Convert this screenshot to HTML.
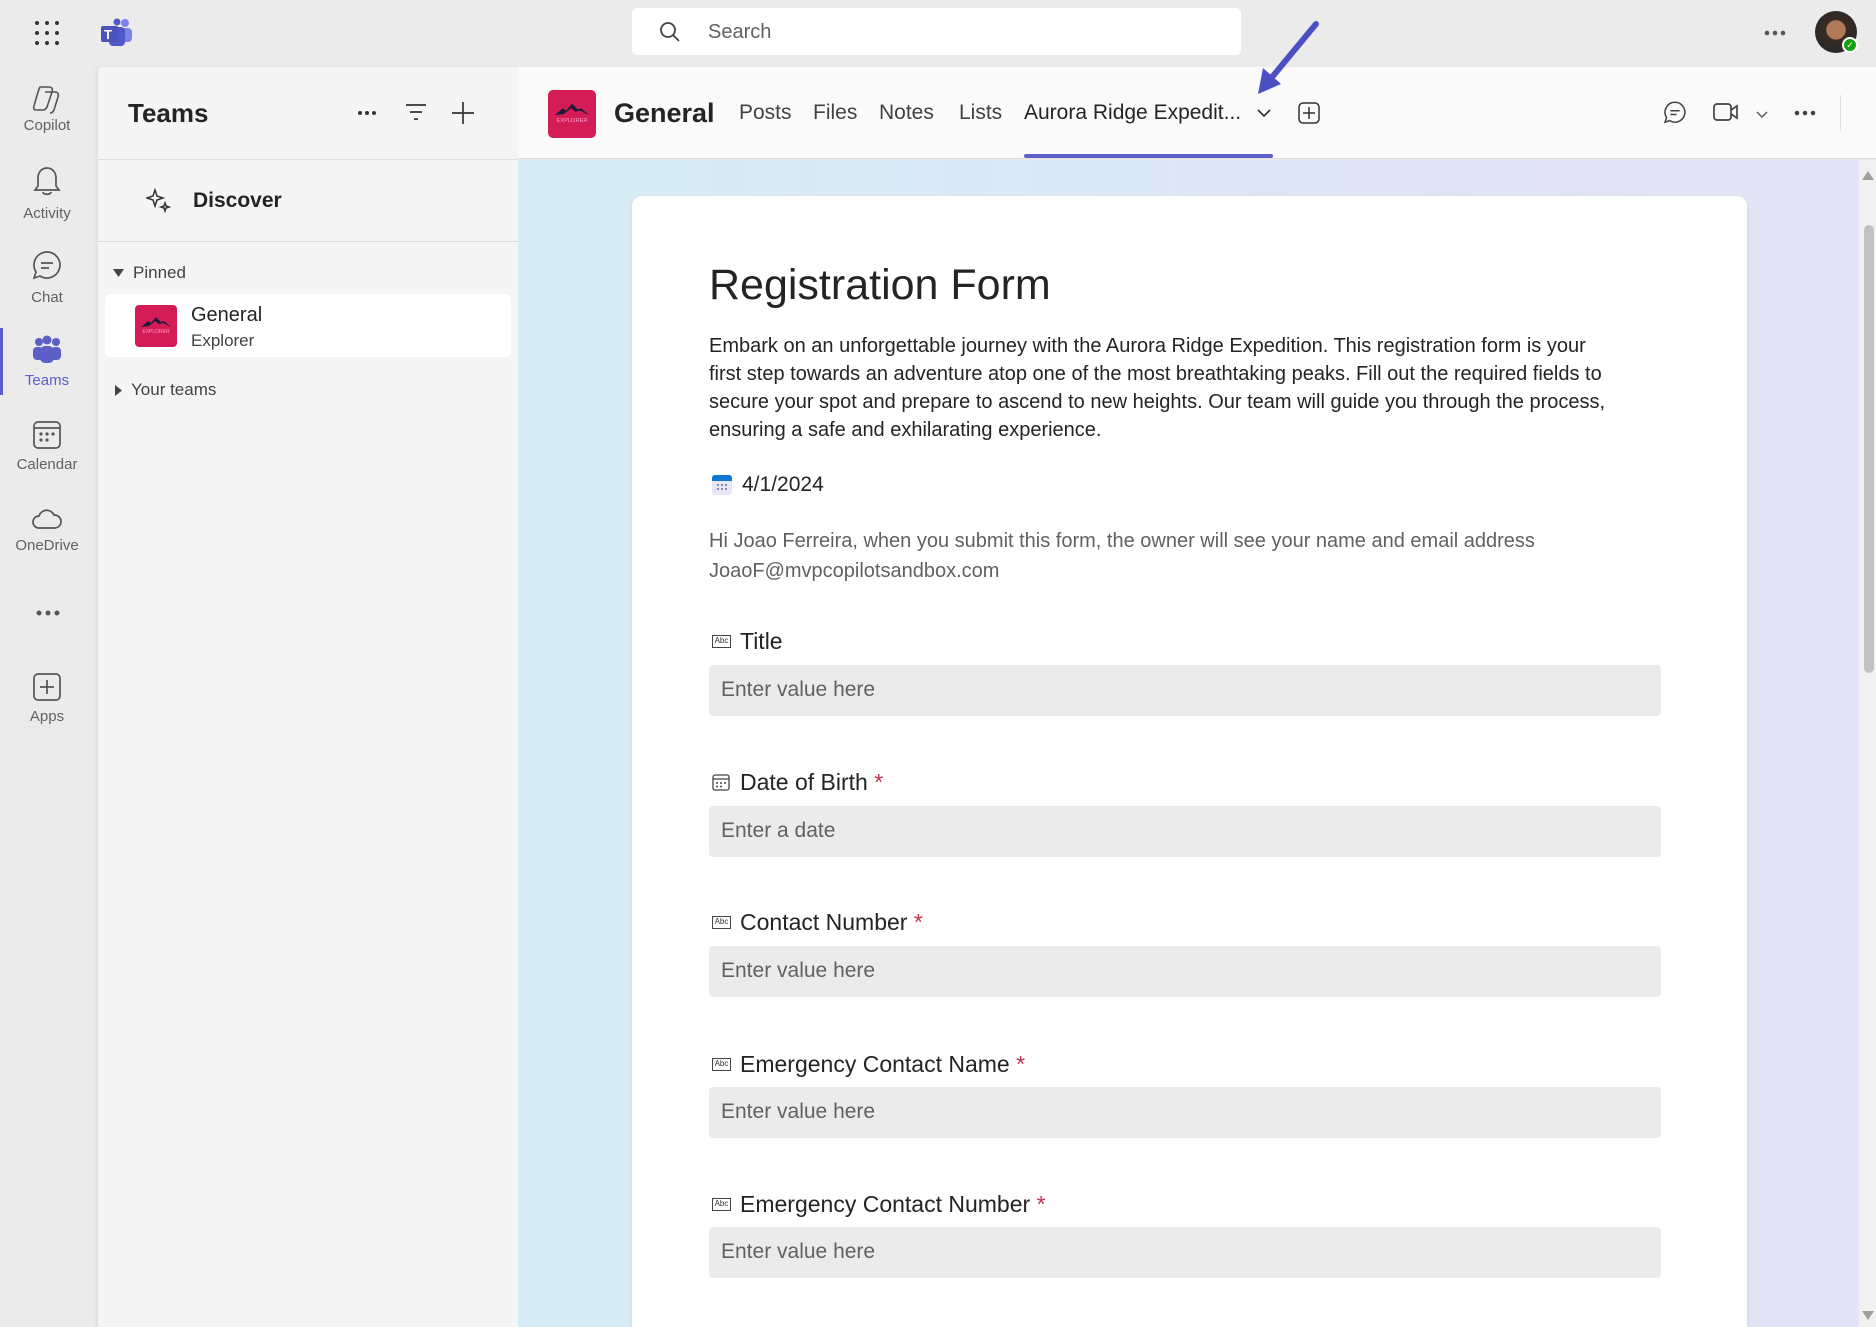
<!DOCTYPE html>
<html><head><meta charset="utf-8"><style>
*{margin:0;padding:0;box-sizing:border-box}
html,body{width:1876px;height:1327px;overflow:hidden}
body{background:#ebebeb;font-family:"Liberation Sans",sans-serif;position:relative;color:#242424}
.a{position:absolute}
.rl{position:absolute;left:0;width:94px;text-align:center;font-size:15px;color:#616161}
.ic{position:absolute;left:30px;width:34px;height:34px}
.lab{position:absolute;left:740px;font-size:23px;color:#242424}
.lab i{color:#c4314b;font-style:normal}
.inp{position:absolute;left:709px;width:952px;height:51px;background:#ebebeb;border-radius:4px;font-size:21px;color:#616161;padding:13px 12px}
.abc{position:absolute;left:712px;width:19px;height:13px;border:1.3px solid #444;font-size:8px;line-height:10px;text-align:center;color:#333}
.tab{position:absolute;top:101px;font-size:21px;color:#424242}
</style></head><body>
<!-- top bar -->
<svg class="a" style="left:34px;top:20px" width="26" height="26" viewBox="0 0 26 26" fill="#333"><circle cx="3" cy="3" r="2"/><circle cx="13" cy="3" r="2"/><circle cx="23" cy="3" r="2"/><circle cx="3" cy="13" r="2"/><circle cx="13" cy="13" r="2"/><circle cx="23" cy="13" r="2"/><circle cx="3" cy="23" r="2"/><circle cx="13" cy="23" r="2"/><circle cx="23" cy="23" r="2"/></svg>
<svg class="a" style="left:100px;top:18px" width="34" height="30" viewBox="0 0 34 30"><circle cx="25" cy="5" r="4" fill="#7b83eb"/><rect x="18" y="10" width="14" height="14" rx="4" fill="#7b83eb"/><circle cx="17" cy="4" r="3.5" fill="#5059c9"/><rect x="9" y="9" width="16" height="19" rx="4" fill="#5059c9"/><rect x="1" y="8" width="17" height="16" rx="2" fill="#4b53bc"/><text x="4" y="21" font-size="13" font-weight="bold" fill="#fff" font-family="Liberation Sans">T</text></svg>
<div class="a" style="left:632px;top:8px;width:609px;height:47px;background:#fff;border-radius:5px"></div>
<svg class="a" style="left:659px;top:21px" width="22" height="22" viewBox="0 0 22 22" fill="none" stroke="#424242" stroke-width="1.8"><circle cx="9" cy="9" r="7"/><path d="M14 14l6 6"/></svg>
<div class="a" style="left:708px;top:21px;font-size:20px;color:#616161">Search</div>
<svg class="a" style="left:1764px;top:30px" width="22" height="6" fill="#555"><circle cx="3" cy="3" r="2.3"/><circle cx="11" cy="3" r="2.3"/><circle cx="19" cy="3" r="2.3"/></svg>
<div class="a" style="left:1815px;top:11px;width:42px;height:42px;border-radius:50%;background:radial-gradient(circle at 50% 45%,#b07a5a 0 30%,#3a2a22 32%,#2a2a2a 70%)"></div>
<div class="a" style="left:1842px;top:37px;width:16px;height:16px;border-radius:50%;background:#13a10e;border:2px solid #fff;color:#fff;font-size:9px;text-align:center;line-height:12px">✓</div>

<!-- rail -->
<div class="a" style="left:0;top:67px;width:98px;height:1260px;background:#ebebeb"></div>
<div class="a" style="left:0;top:328px;width:3px;height:67px;background:#5b5fc7"></div>
<svg class="ic" style="top:81px" viewBox="0 0 34 34" fill="none" stroke="#555" stroke-width="1.6"><path d="M10 6h9c3 0 4 2 3 5l-5 15c-1 2-2 3-4 3H6c-2 0-3-2-2-4l4-14c1-3 2-5 2-5z"/><path d="M15 11h10c3 0 4 2 3 5l-4 13c-1 2-2 3-4 3"/></svg>
<div class="rl" style="top:117px">Copilot</div>
<svg class="ic" style="top:165px" viewBox="0 0 34 34" fill="none" stroke="#555" stroke-width="1.7"><path d="M17 3c-6 0-9 5-9 10v8l-3 4h24l-3-4v-8c0-5-3-10-9-10z"/><path d="M13 27c0 3 8 3 8 0"/></svg>
<div class="rl" style="top:205px">Activity</div>
<svg class="ic" style="top:249px" viewBox="0 0 34 34" fill="none" stroke="#555" stroke-width="1.7"><path d="M17 3a13 13 0 1 1-7 24l-6 2 2-6A13 13 0 0 1 17 3z"/><path d="M11 14h12M11 19h8"/></svg>
<div class="rl" style="top:289px">Chat</div>
<svg class="ic" style="top:334px" viewBox="0 0 34 34" fill="#5b5fc7"><circle cx="9" cy="8" r="4"/><circle cx="17" cy="6" r="4.5"/><circle cx="26" cy="8" r="4"/><rect x="3" y="13" width="10" height="13" rx="4"/><rect x="21" y="13" width="10" height="13" rx="4"/><rect x="10" y="12" width="14" height="17" rx="5"/></svg>
<div class="rl" style="top:372px;color:#5b5fc7">Teams</div>
<svg class="ic" style="top:418px" viewBox="0 0 34 34" fill="none" stroke="#555" stroke-width="1.7"><rect x="4" y="4" width="26" height="26" rx="4"/><path d="M4 10h26"/><g fill="#555" stroke="none"><circle cx="11" cy="16" r="1.6"/><circle cx="17" cy="16" r="1.6"/><circle cx="23" cy="16" r="1.6"/><circle cx="11" cy="22" r="1.6"/><circle cx="17" cy="22" r="1.6"/></g></svg>
<div class="rl" style="top:456px">Calendar</div>
<svg class="ic" style="top:502px" viewBox="0 0 34 34" fill="none" stroke="#555" stroke-width="1.7"><path d="M9 26a6 6 0 0 1 0-12 8 8 0 0 1 15-1 6.5 6.5 0 0 1 1 13z"/></svg>
<div class="rl" style="top:537px">OneDrive</div>
<svg class="a" style="left:36px;top:610px" width="24" height="6" fill="#555"><circle cx="3" cy="3" r="2.5"/><circle cx="12" cy="3" r="2.5"/><circle cx="21" cy="3" r="2.5"/></svg>
<svg class="ic" style="top:670px" viewBox="0 0 34 34" fill="none" stroke="#555" stroke-width="1.7"><rect x="4" y="4" width="26" height="26" rx="4"/><path d="M17 10v14M10 17h14"/></svg>
<div class="rl" style="top:708px">Apps</div>

<!-- teams panel -->
<div class="a" style="left:98px;top:67px;width:420px;height:1260px;background:#f5f5f5;border-top-left-radius:4px;box-shadow:-2px 0 4px rgba(0,0,0,.06)"></div>
<div class="a" style="left:128px;top:98px;font-size:26px;font-weight:bold">Teams</div>
<svg class="a" style="left:357px;top:110px" width="20" height="6" fill="#333"><circle cx="3" cy="3" r="2"/><circle cx="10" cy="3" r="2"/><circle cx="17" cy="3" r="2"/></svg>
<svg class="a" style="left:405px;top:103px" width="22" height="18" fill="none" stroke="#333" stroke-width="1.7"><path d="M1 2h20M5 9h12M9 16h4"/></svg>
<svg class="a" style="left:451px;top:101px" width="24" height="24" fill="none" stroke="#333" stroke-width="1.7"><path d="M12 1v22M1 12h22"/></svg>
<div class="a" style="left:98px;top:159px;width:420px;height:1px;background:#ddd"></div>
<svg class="a" style="left:146px;top:188px" width="26" height="26" viewBox="0 0 26 26" fill="none" stroke="#333" stroke-width="1.5"><path d="M9 2l2 6 6 2-6 2-2 6-2-6-6-2 6-2z"/><path d="M19 15l1 3 3 1-3 1-1 3-1-3-3-1 3-1z"/></svg>
<div class="a" style="left:193px;top:189px;font-size:21px;font-weight:bold">Discover</div>
<div class="a" style="left:98px;top:241px;width:420px;height:1px;background:#ddd"></div>
<svg class="a" style="left:113px;top:269px" width="11" height="8" fill="#444"><path d="M0 0h11L5.5 8z"/></svg>
<div class="a" style="left:133px;top:263px;font-size:17px;color:#424242">Pinned</div>
<div class="a" style="left:105px;top:294px;width:406px;height:63px;background:#fff;border-radius:5px"></div>
<div class="a" style="left:135px;top:305px;width:42px;height:42px;background:#d41d56;border-radius:4px"><svg width="42" height="42" viewBox="0 0 42 42"><path d="M6 22l7-6 3 2 5-6 5 5 3-1 7 6-8-4-4 1-4-3-6 5z" fill="#1e1a3c"/><text x="21" y="28" font-size="5" fill="#f9c" text-anchor="middle" font-family="Liberation Sans">EXPLORER</text></svg></div>
<div class="a" style="left:191px;top:304px;font-size:20px">General</div>
<div class="a" style="left:191px;top:331px;font-size:17px;color:#424242">Explorer</div>
<svg class="a" style="left:115px;top:385px" width="7" height="11" fill="#444"><path d="M0 0v11l7-5.5z"/></svg>
<div class="a" style="left:131px;top:380px;font-size:17px;color:#424242">Your teams</div>

<!-- main header -->
<div class="a" style="left:518px;top:67px;width:1358px;height:92px;background:#fafafa;border-bottom:1px solid #e0e0e0"></div>
<div class="a" style="left:548px;top:90px;width:48px;height:48px;background:#d41d56;border-radius:5px"><svg width="48" height="48" viewBox="0 0 42 42"><path d="M6 22l7-6 3 2 5-6 5 5 3-1 7 6-8-4-4 1-4-3-6 5z" fill="#1e1a3c"/><text x="21" y="28" font-size="5" fill="#f9c" text-anchor="middle" font-family="Liberation Sans">EXPLORER</text></svg></div>
<div class="a" style="left:614px;top:98px;font-size:27px;font-weight:bold">General</div>
<div class="tab" style="left:739px">Posts</div>
<div class="tab" style="left:813px">Files</div>
<div class="tab" style="left:879px">Notes</div>
<div class="tab" style="left:959px">Lists</div>
<div class="tab" style="left:1024px;color:#242424">Aurora Ridge Expedit...</div>
<svg class="a" style="left:1257px;top:109px" width="14" height="9" fill="none" stroke="#333" stroke-width="1.6"><path d="M1 1l6 6 6-6"/></svg>
<div class="a" style="left:1024px;top:154px;width:249px;height:4px;background:#5b5fc7;border-radius:2px"></div>
<svg class="a" style="left:1298px;top:102px" width="22" height="22" fill="none" stroke="#333" stroke-width="1.5"><rect x="1" y="1" width="20" height="20" rx="4"/><path d="M11 5v12M5 11h12"/></svg>
<svg class="a" style="left:1250px;top:18px" width="80" height="80"><path d="M66 6L18 64" stroke="#4b4fc2" stroke-width="6" stroke-linecap="round"/><path d="M8 76l5-26 18 16z" fill="#4b4fc2"/></svg>
<svg class="a" style="left:1662px;top:100px" width="26" height="26" viewBox="0 0 34 34" fill="none" stroke="#424242" stroke-width="2"><path d="M17 3a13 13 0 1 1-7 24l-6 2 2-6A13 13 0 0 1 17 3z"/><path d="M11 14h12M11 19h8"/></svg>
<svg class="a" style="left:1713px;top:102px" width="26" height="20" fill="none" stroke="#424242" stroke-width="1.7"><rect x="1" y="2" width="17" height="16" rx="3"/><path d="M18 8l6-4v12l-6-4"/></svg>
<svg class="a" style="left:1756px;top:111px" width="12" height="7" fill="none" stroke="#555" stroke-width="1.4"><path d="M1 1l5 5 5-5"/></svg>
<svg class="a" style="left:1794px;top:110px" width="22" height="6" fill="#424242"><circle cx="3" cy="3" r="2.3"/><circle cx="11" cy="3" r="2.3"/><circle cx="19" cy="3" r="2.3"/></svg>
<div class="a" style="left:1840px;top:95px;width:1px;height:36px;background:#e0e0e0"></div>

<!-- content bg -->
<div class="a" style="left:518px;top:160px;width:1341px;height:1167px;background:linear-gradient(90deg,#d6edf5,#dfe6f6 60%,#e5e3f7)"></div>
<div class="a" style="left:1859px;top:160px;width:17px;height:1167px;background:#f1f1f1"></div>
<svg class="a" style="left:1862px;top:171px" width="12" height="9" fill="#a0a0a0"><path d="M0 9L6 0l6 9z"/></svg>
<div class="a" style="left:1864px;top:225px;width:10px;height:448px;background:#c1c1c1;border-radius:5px"></div>
<svg class="a" style="left:1862px;top:1311px" width="12" height="9" fill="#a0a0a0"><path d="M0 0h12L6 9z"/></svg>

<!-- card -->
<div class="a" style="left:632px;top:196px;width:1115px;height:1131px;background:#fff;border-radius:10px 10px 0 0;box-shadow:0 1px 4px rgba(0,0,0,.08)"></div>
<div class="a" style="left:709px;top:261px;font-size:43px;color:#242424">Registration Form</div>
<div class="a" style="left:709px;top:332px;font-size:20px;line-height:28px;color:#242424;white-space:nowrap">Embark on an unforgettable journey with the Aurora Ridge Expedition. This registration form is your<br>first step towards an adventure atop one of the most breathtaking peaks. Fill out the required fields to<br>secure your spot and prepare to ascend to new heights. Our team will guide you through the process,<br>ensuring a safe and exhilarating experience.</div>
<svg class="a" style="left:712px;top:475px" width="20" height="20" viewBox="0 0 20 20"><rect x="0" y="0" width="20" height="20" rx="3" fill="#e8e6f4"/><path d="M0 3a3 3 0 0 1 3-3h14a3 3 0 0 1 3 3v3H0z" fill="#0f78d4"/><g fill="#6b6b9a"><circle cx="6" cy="10" r="1"/><circle cx="10" cy="10" r="1"/><circle cx="14" cy="10" r="1"/><circle cx="6" cy="14" r="1"/><circle cx="10" cy="14" r="1"/><circle cx="14" cy="14" r="1"/></g></svg>
<div class="a" style="left:742px;top:473px;font-size:21px">4/1/2024</div>
<div class="a" style="left:709px;top:526px;font-size:20px;line-height:30px;color:#616161;white-space:nowrap">Hi Joao Ferreira, when you submit this form, the owner will see your name and email address<br>JoaoF@mvpcopilotsandbox.com</div>

<div class="abc" style="top:635px">Abc</div><div class="lab" style="top:628px">Title</div>
<div class="inp" style="top:665px">Enter value here</div>

<svg class="a" style="left:712px;top:774px" width="18" height="17" fill="none" stroke="#444" stroke-width="1.3"><rect x="1" y="1" width="16" height="15" rx="2"/><path d="M1 5h16"/><g fill="#444" stroke="none"><circle cx="5" cy="9" r="1"/><circle cx="9" cy="9" r="1"/><circle cx="13" cy="9" r="1"/><circle cx="5" cy="12.5" r="1"/><circle cx="9" cy="12.5" r="1"/></g></svg>
<div class="lab" style="top:769px">Date of Birth <i>*</i></div>
<div class="inp" style="top:806px">Enter a date</div>

<div class="abc" style="top:916px">Abc</div><div class="lab" style="top:909px">Contact Number <i>*</i></div>
<div class="inp" style="top:946px">Enter value here</div>

<div class="abc" style="top:1058px">Abc</div><div class="lab" style="top:1051px">Emergency Contact Name <i>*</i></div>
<div class="inp" style="top:1087px">Enter value here</div>

<div class="abc" style="top:1198px">Abc</div><div class="lab" style="top:1191px">Emergency Contact Number <i>*</i></div>
<div class="inp" style="top:1227px">Enter value here</div>
</body></html>
